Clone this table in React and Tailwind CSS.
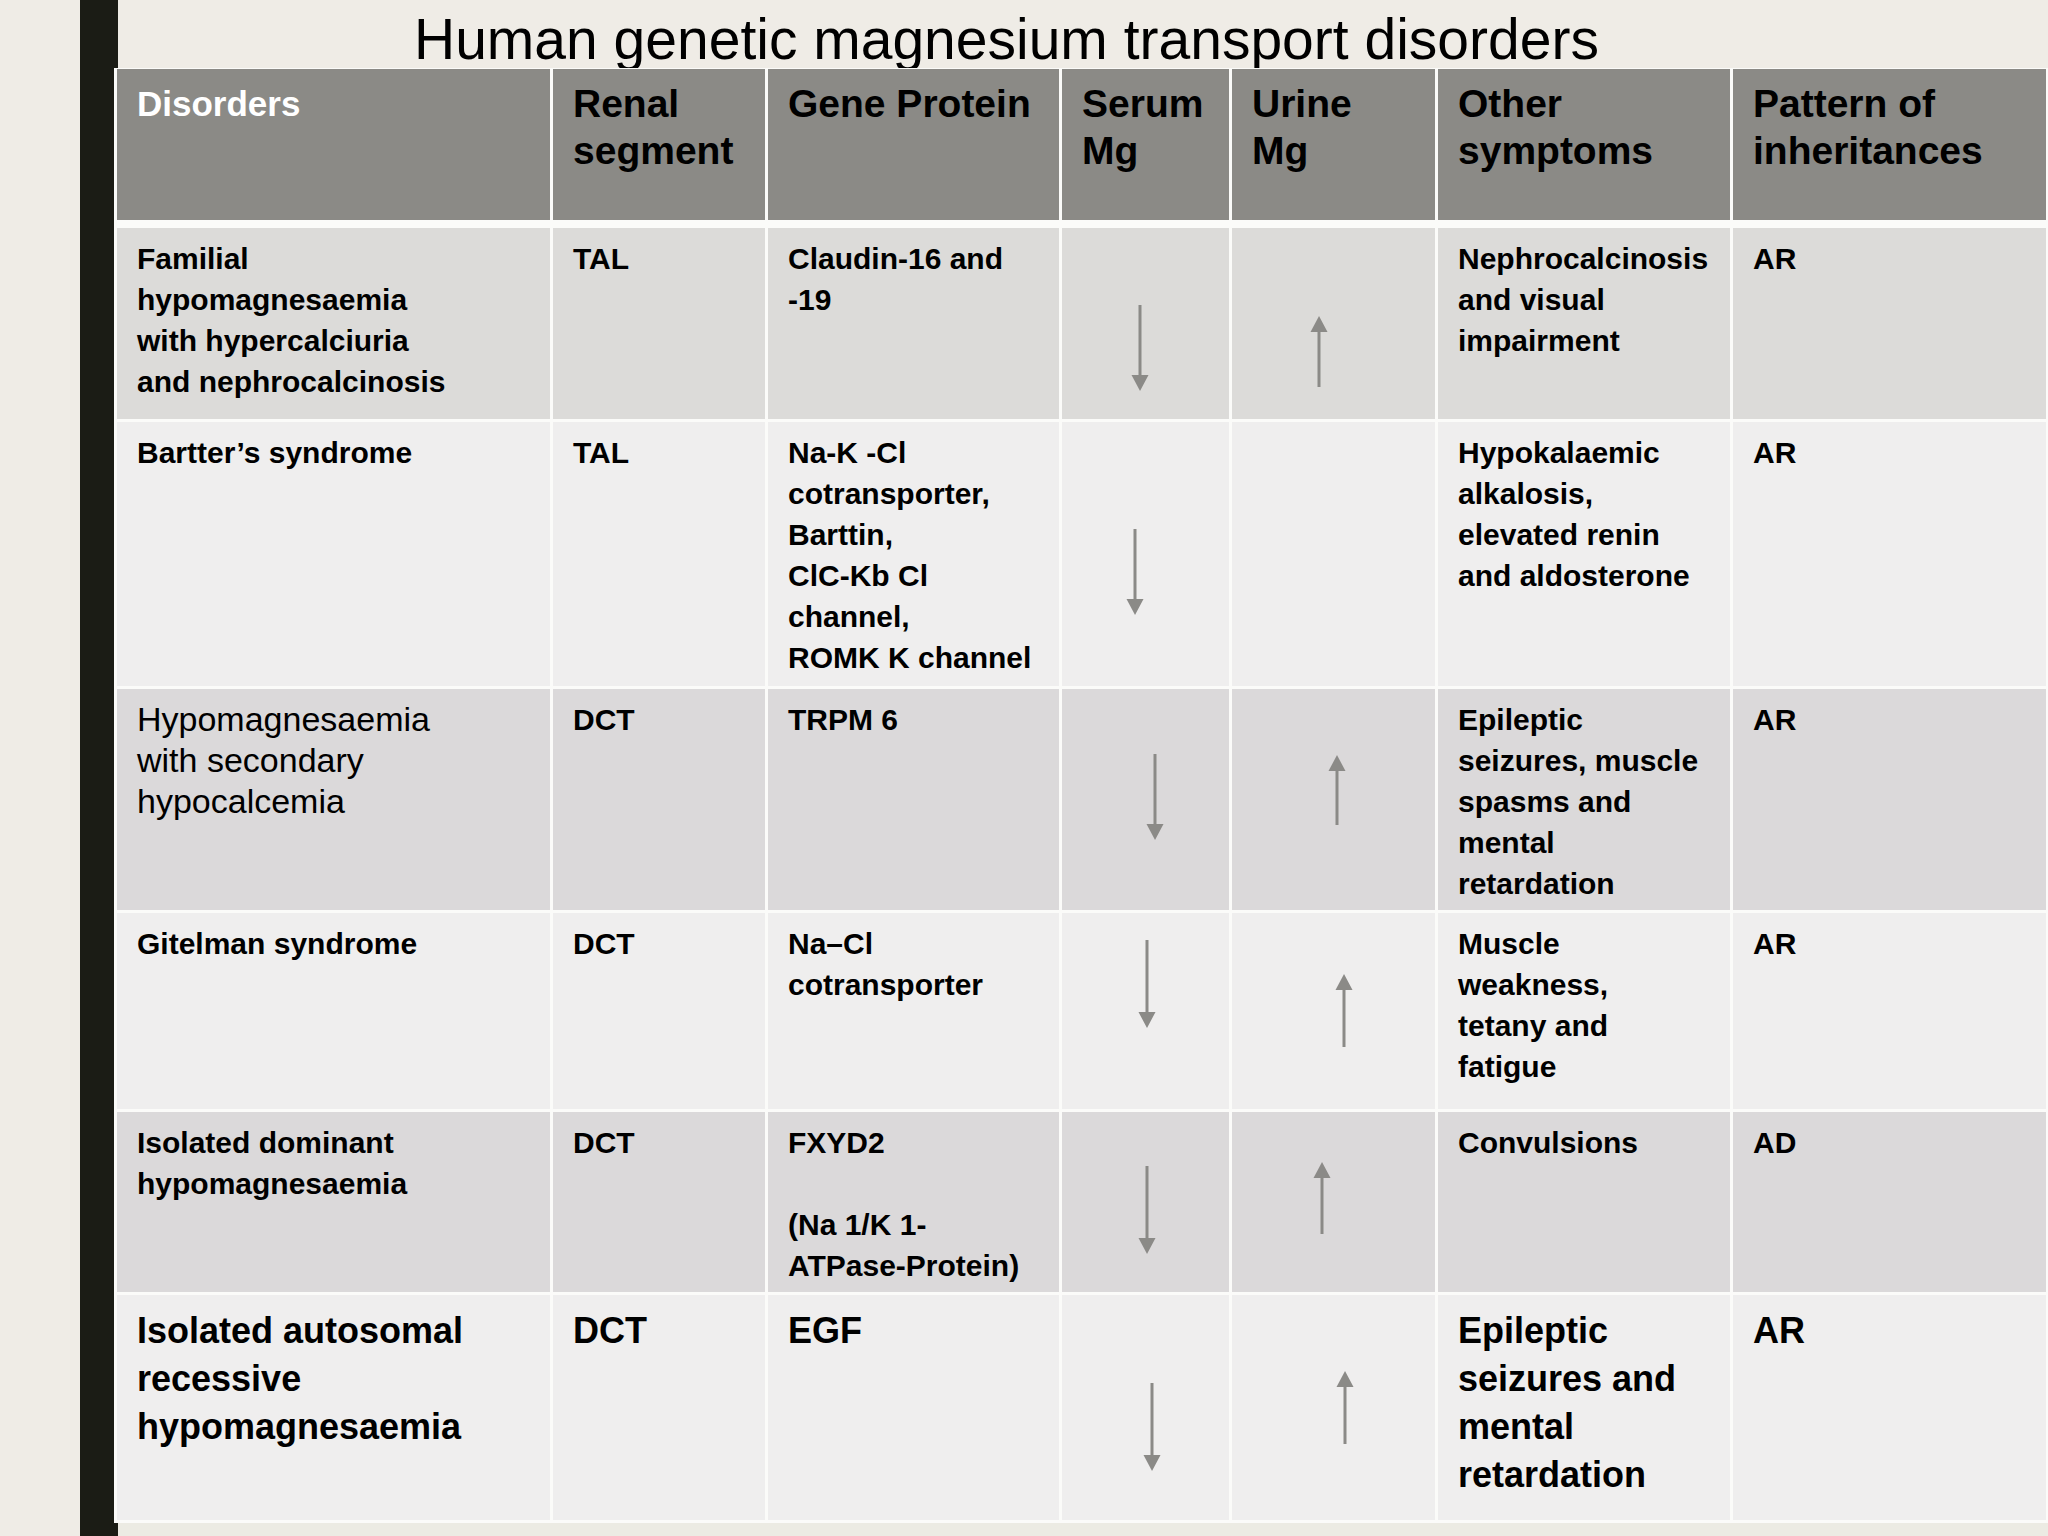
import React from "react";

const ARROW = "#8b8a87";

function Down({ h }) {
  return (
    <svg width="18" height={h} viewBox={`0 0 18 ${h}`}>
      <line x1="9" y1="0" x2="9" y2={h - 12} stroke={ARROW} strokeWidth="3" />
      <polygon points={`0.5,${h - 16} 17.5,${h - 16} 9,${h}`} fill={ARROW} />
    </svg>
  );
}

function Up({ h }) {
  return (
    <svg width="18" height={h} viewBox={`0 0 18 ${h}`}>
      <line x1="9" y1="12" x2="9" y2={h} stroke={ARROW} strokeWidth="3" />
      <polygon points={`0.5,16 17.5,16 9,0`} fill={ARROW} />
    </svg>
  );
}

function Lines({ lines }) {
  return lines.map((l, i) => (
    <React.Fragment key={i}>
      {l}
      {i < lines.length - 1 ? <br /> : null}
    </React.Fragment>
  ));
}

const GRID =
  "grid grid-cols-[433px_212px_291px_167px_203px_292px_313px] gap-x-[3px]";

export default function App() {
  const odd = "bg-[#dcdbd9]";
  const even = "bg-[#efeeee]";
  const cell = "relative pl-[20px] pt-[10px] whitespace-nowrap text-black";
  const body = "text-[30px] leading-[41px] font-bold";
  const big = "text-[36px] leading-[48px] font-bold";

  return (
    <div className="flex h-[1536px] w-[2048px] overflow-hidden bg-[#efece6] font-['Liberation_Sans',Arial,sans-serif]">
      <div className="w-[80px] shrink-0" />
      <div className="w-[34px] shrink-0 bg-[#1b1c15]" />
      <div className="flex min-w-0 flex-1 flex-col">
        <div className="h-[68px] shrink-0 border-l-4 border-[#1b1c15] pl-[296px] pt-[11px] text-[57px] leading-[57px] whitespace-nowrap text-black">
          Human genetic magnesium transport disorders
        </div>

        <div className="flex shrink-0 flex-col gap-y-[3px] bg-[#fbfbf9] pl-[3px] pr-[2px] pt-[1px] pb-[3px]">
          {/* Header */}
          <div className={`${GRID} mb-[5px] h-[151px]`}>
            <div className="bg-[#8b8a86] pl-[20px] pt-[11px] text-[35px] leading-[47px] font-bold text-white">
              Disorders
            </div>
            <div className="bg-[#8b8a86] pl-[20px] pt-[11px] text-[39px] leading-[47px] font-bold text-black">
              Renal
              <br />
              segment
            </div>
            <div className="bg-[#8b8a86] pl-[20px] pt-[11px] text-[39px] leading-[47px] font-bold text-black whitespace-nowrap">
              Gene Protein
            </div>
            <div className="bg-[#8b8a86] pl-[20px] pt-[11px] text-[39px] leading-[47px] font-bold text-black">
              Serum
              <br />
              Mg
            </div>
            <div className="bg-[#8b8a86] pl-[20px] pt-[11px] text-[39px] leading-[47px] font-bold text-black">
              Urine
              <br />
              Mg
            </div>
            <div className="bg-[#8b8a86] pl-[20px] pt-[11px] text-[39px] leading-[47px] font-bold text-black">
              Other
              <br />
              symptoms
            </div>
            <div className="bg-[#8b8a86] pl-[20px] pt-[11px] text-[39px] leading-[47px] font-bold text-black whitespace-nowrap">
              Pattern of
              <br />
              inheritances
            </div>
          </div>

          {/* Row 1 */}
          <div className={`${GRID} h-[191px] ${body}`}>
            <div className={`${cell} ${odd}`}>
              <Lines lines={["Familial", "hypomagnesaemia", "with hypercalciuria", "and nephrocalcinosis"]} />
            </div>
            <div className={`${cell} ${odd}`}>TAL</div>
            <div className={`${cell} ${odd}`}>
              <Lines lines={["Claudin-16 and", "-19"]} />
            </div>
            <div className={`${cell} ${odd}`}>
              <div className="absolute left-[69px] top-[77px] flex">
                <Down h={86} />
              </div>
            </div>
            <div className={`${cell} ${odd}`}>
              <div className="absolute left-[78px] top-[88px] flex">
                <Up h={71} />
              </div>
            </div>
            <div className={`${cell} ${odd}`}>
              <Lines lines={["Nephrocalcinosis", "and visual", "impairment"]} />
            </div>
            <div className={`${cell} ${odd}`}>AR</div>
          </div>

          {/* Row 2 */}
          <div className={`${GRID} h-[264px] ${body}`}>
            <div className={`${cell} ${even}`}>Bartter’s syndrome</div>
            <div className={`${cell} ${even}`}>TAL</div>
            <div className={`${cell} ${even}`}>
              <Lines lines={["Na-K -Cl", "cotransporter,", "Barttin,", "ClC-Kb Cl", "channel,", "ROMK K channel"]} />
            </div>
            <div className={`${cell} ${even}`}>
              <div className="absolute left-[64px] top-[107px] flex">
                <Down h={86} />
              </div>
            </div>
            <div className={`${cell} ${even}`} />
            <div className={`${cell} ${even}`}>
              <Lines lines={["Hypokalaemic", "alkalosis,", "elevated renin", "and aldosterone"]} />
            </div>
            <div className={`${cell} ${even}`}>AR</div>
          </div>

          {/* Row 3 */}
          <div className={`${GRID} h-[221px] ${body}`}>
            <div className={`${cell} bg-[#dbd9da] text-[34px] font-normal`}>
              <Lines lines={["Hypomagnesaemia", "with secondary", "hypocalcemia"]} />
            </div>
            <div className={`${cell} bg-[#dbd9da]`}>DCT</div>
            <div className={`${cell} bg-[#dbd9da]`}>TRPM 6</div>
            <div className={`${cell} bg-[#dbd9da]`}>
              <div className="absolute left-[84px] top-[65px] flex">
                <Down h={86} />
              </div>
            </div>
            <div className={`${cell} bg-[#dbd9da]`}>
              <div className="absolute left-[96px] top-[66px] flex">
                <Up h={70} />
              </div>
            </div>
            <div className={`${cell} bg-[#dbd9da]`}>
              <Lines lines={["Epileptic", "seizures, muscle", "spasms and", "mental", "retardation"]} />
            </div>
            <div className={`${cell} bg-[#dbd9da]`}>AR</div>
          </div>

          {/* Row 4 */}
          <div className={`${GRID} h-[196px] ${body}`}>
            <div className={`${cell} ${even}`}>Gitelman syndrome</div>
            <div className={`${cell} ${even}`}>DCT</div>
            <div className={`${cell} ${even}`}>
              <Lines lines={["Na–Cl", "cotransporter"]} />
            </div>
            <div className={`${cell} ${even}`}>
              <div className="absolute left-[76px] top-[27px] flex">
                <Down h={88} />
              </div>
            </div>
            <div className={`${cell} ${even}`}>
              <div className="absolute left-[103px] top-[61px] flex">
                <Up h={73} />
              </div>
            </div>
            <div className={`${cell} ${even}`}>
              <Lines lines={["Muscle", "weakness,", "tetany and", "fatigue"]} />
            </div>
            <div className={`${cell} ${even}`}>AR</div>
          </div>

          {/* Row 5 */}
          <div className={`${GRID} h-[180px] ${body}`}>
            <div className={`${cell} bg-[#dbd9da]`}>
              <Lines lines={["Isolated dominant", "hypomagnesaemia"]} />
            </div>
            <div className={`${cell} bg-[#dbd9da]`}>DCT</div>
            <div className={`${cell} bg-[#dbd9da]`}>
              <Lines lines={["FXYD2", "\u00a0", "(Na 1/K 1-", "ATPase-Protein)"]} />
            </div>
            <div className={`${cell} bg-[#dbd9da]`}>
              <div className="absolute left-[76px] top-[54px] flex">
                <Down h={88} />
              </div>
            </div>
            <div className={`${cell} bg-[#dbd9da]`}>
              <div className="absolute left-[81px] top-[50px] flex">
                <Up h={72} />
              </div>
            </div>
            <div className={`${cell} bg-[#dbd9da]`}>Convulsions</div>
            <div className={`${cell} bg-[#dbd9da]`}>AD</div>
          </div>

          {/* Row 6 */}
          <div className={`${GRID} h-[225px] ${big}`}>
            <div className={`${cell} ${even} pt-[12px]`}>
              <Lines lines={["Isolated autosomal", "recessive", "hypomagnesaemia"]} />
            </div>
            <div className={`${cell} ${even} pt-[12px]`}>DCT</div>
            <div className={`${cell} ${even} pt-[12px]`}>EGF</div>
            <div className={`${cell} ${even}`}>
              <div className="absolute left-[81px] top-[88px] flex">
                <Down h={88} />
              </div>
            </div>
            <div className={`${cell} ${even}`}>
              <div className="absolute left-[104px] top-[76px] flex">
                <Up h={73} />
              </div>
            </div>
            <div className={`${cell} ${even} pt-[12px]`}>
              <Lines lines={["Epileptic", "seizures and", "mental", "retardation"]} />
            </div>
            <div className={`${cell} ${even} pt-[12px]`}>AR</div>
          </div>
        </div>

        <div className="flex-1 border-l-4 border-[#1b1c15] bg-[#ecebe3]" />
      </div>
    </div>
  );
}
